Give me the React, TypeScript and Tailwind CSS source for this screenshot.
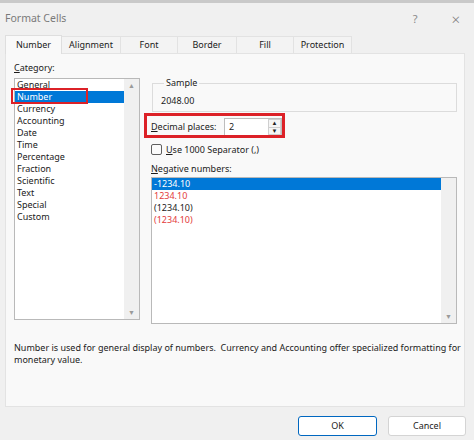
import React from 'react';

const font = { fontFamily: '"Noto Sans", "Open Sans", sans-serif' };

const categories = [
  'General',
  'Number',
  'Currency',
  'Accounting',
  'Date',
  'Time',
  'Percentage',
  'Fraction',
  'Scientific',
  'Text',
  'Special',
  'Custom',
];

const tabs = ['Number', 'Alignment', 'Font', 'Border', 'Fill', 'Protection'];
const tabWidths = ['w-[57px]', 'w-[59px]', 'w-[57px]', 'w-[59px]', 'w-[57px]', 'w-[58px]'];

function ScrollTrack({ showUp = true }: { showUp?: boolean }) {
  return (
    <div className="w-[15px] h-full bg-[#f0f0f0] flex flex-col items-center justify-between py-[3px] text-[7px] leading-none text-[#9a9a9a]">
      <span className={showUp ? '' : 'invisible'}>▲</span>
      <span>▼</span>
    </div>
  );
}

export default function App() {
  return (
    <div
      className="w-[474px] h-[440px] bg-[#f0f0f0] flex flex-col overflow-hidden text-[9px] text-[#1b1b1b] antialiased"
      style={font}
    >
      <div className="h-[3px] bg-[#c9c9c9] shrink-0" />

      {/* title bar */}
      <div className="h-[32px] shrink-0 flex items-center pl-[5px] pr-[14px]">
        <span className="text-[10.5px] text-[#7a7a7a]">Format Cells</span>
        <span className="ml-auto text-[11px] text-[#8a8a8a] mr-[34px]">?</span>
        <span className="text-[15px] font-light text-[#7a7a7a] leading-none">×</span>
      </div>

      {/* tabs */}
      <div className="h-[18px] shrink-0 flex items-end pl-[5px] relative z-10">
        {tabs.map((t, i) =>
          i === 0 ? (
            <div
              key={t}
              className={`${tabWidths[i]} h-[19px] bg-[#f9f9f9] border border-b-0 border-[#dedede] flex items-center justify-center -mb-px`}
            >
              {t}
            </div>
          ) : (
            <div
              key={t}
              className={`${tabWidths[i]} h-[17px] bg-[#f3f3f3] border border-l-0 border-b-0 border-[#e2e2e2] flex items-center justify-center`}
            >
              {t}
            </div>
          )
        )}
      </div>

      {/* panel */}
      <div className="ml-[5px] mr-[9px] h-[354px] shrink-0 bg-[#f9f9f9] border border-[#e3e3e3] flex flex-col relative">
        <div className="flex pl-[8px]">
          {/* left column */}
          <div className="w-[126px] pt-[8px] flex flex-col relative">
            <div className="h-[12px] leading-[12px]">
              <span className="underline underline-offset-1">C</span>ategory:
            </div>
            <div className="mt-[4px] h-[242px] bg-white border border-[#b9b9b9] flex overflow-hidden">
              <div className="flex-1 flex flex-col">
                {categories.map((c, i) => (
                  <div
                    key={c}
                    className={`h-[12px] leading-[12px] pl-[2px] ${
                      i === 1 ? 'bg-[#0078d7] text-white' : ''
                    }`}
                  >
                    {c}
                  </div>
                ))}
              </div>
              <ScrollTrack />
            </div>
            {/* red highlight */}
            <div className="absolute left-[-3px] top-[34px] w-[77px] h-[16px] border-2 border-[#dc2127]" />
          </div>

          {/* right column */}
          <div className="ml-[11px] w-[306px] flex flex-col relative">
            <fieldset className="mt-[23px] border border-[#dcdcdc] pl-[8px] pb-[4px] ml-[1px]">
              <legend className="ml-[3px] px-[2px] h-[12px] leading-[12px]">Sample</legend>
              <div className="mt-[6px] h-[12px] leading-[12px]">2048.00</div>
            </fieldset>

            <div className="mt-[6px] h-[18px] flex items-center">
              <span className="w-[73px]">
                <span className="underline underline-offset-1">D</span>ecimal places:
              </span>
              <div className="w-[58px] h-[18px] bg-white border border-[#bdbdbd] border-b-[#6d6d6d] flex items-center">
                <span className="pl-[4px] flex-1">2</span>
                <div className="w-[13px] h-full flex flex-col text-[6px] leading-none text-[#222]">
                  <div className="flex-1 flex items-center justify-center border border-[#cfcfcf] bg-[#f5f5f5]">▲</div>
                  <div className="flex-1 flex items-center justify-center border border-t-0 border-[#cfcfcf] bg-[#f5f5f5]">▼</div>
                </div>
              </div>
            </div>
            {/* red highlight */}
            <div className="absolute left-[-7px] top-[59px] w-[141px] h-[25px] border-[3px] border-[#dc2127]" />

            <div className="mt-[8px] h-[11px] flex items-center">
              <div className="w-[11px] h-[11px] border border-[#5f5f5f] rounded-[2px] bg-[#fbfbfb]" />
              <span className="ml-[4px]">
                <span className="underline underline-offset-1">U</span>se 1000 Separator (,)
              </span>
            </div>

            <div className="mt-[8px] h-[12px] leading-[12px]">
              <span className="underline underline-offset-1">N</span>egative numbers:
            </div>

            <div className="mt-[2px] h-[147px] bg-white border border-[#b9b9b9] flex overflow-hidden">
              <div className="flex-1 flex flex-col">
                <div className="h-[12px] leading-[12px] bg-[#0078d7] text-white pl-[2px]">-1234.10</div>
                <div className="h-[12px] leading-[12px] text-[#e33b3b] pl-[2px]">1234.10</div>
                <div className="h-[12px] leading-[12px] pl-[2px]">(1234.10)</div>
                <div className="h-[12px] leading-[12px] text-[#e33b3b] pl-[2px]">(1234.10)</div>
              </div>
              <ScrollTrack showUp={false} />
            </div>
          </div>
        </div>

        <div className="mt-[18px] pl-[8px] leading-[12px]">
          Number is used for general display of numbers.&nbsp; Currency and Accounting offer specialized formatting for
          monetary value.
        </div>
      </div>

      {/* footer */}
      <div className="flex justify-end gap-[11px] pr-[8px] pt-[9px]">
        <button className="w-[79px] h-[20px] bg-white border border-[#0067c0] rounded-[3px] text-[9px]" style={font}>
          OK
        </button>
        <button className="w-[78px] h-[20px] bg-white border border-[#d4d4d4] rounded-[3px] text-[9px]" style={font}>
          Cancel
        </button>
      </div>
    </div>
  );
}
